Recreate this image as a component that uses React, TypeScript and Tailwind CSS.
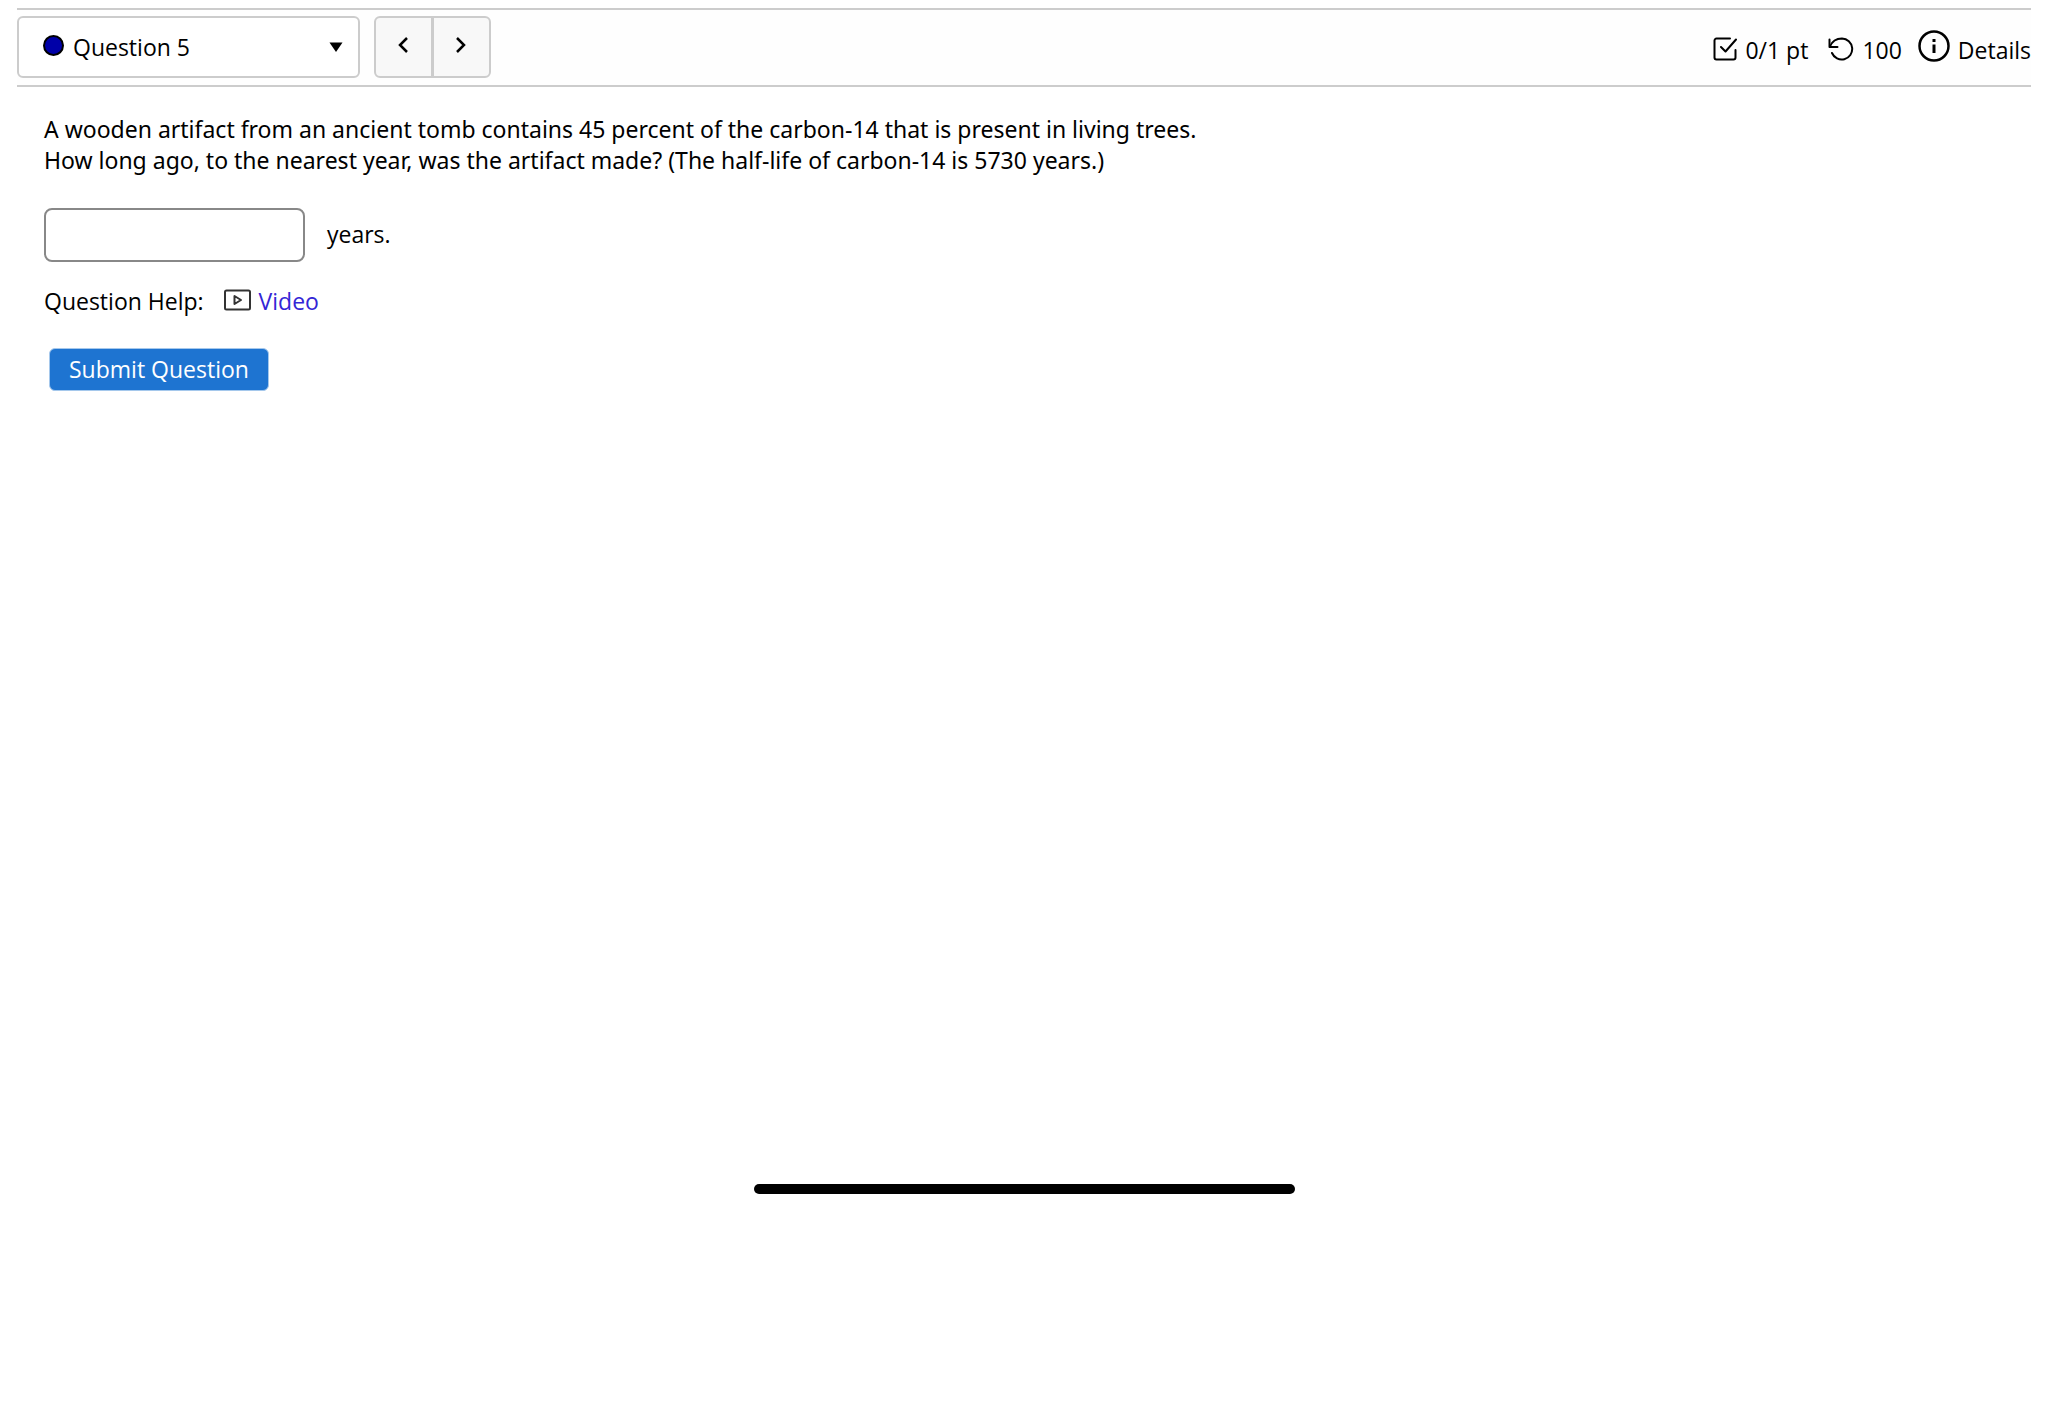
const questions = ["Question 5"];

function CheckIcon() {
  return (
    <svg className="h-6 w-6" viewBox="0 0 24 24" fill="none" stroke="currentColor" strokeWidth="2" strokeLinecap="round" strokeLinejoin="round">
      <path d="M17 1.5H3.5a2 2 0 0 0-2 2v17a2 2 0 0 0 2 2h17a2 2 0 0 0 2-2V13" />
      <path d="M8 10l4.500 4.500L23 2.500" />
    </svg>
  );
}

function RetryIcon() {
  return (
    <svg className="h-6 w-[26px]" viewBox="0 0 26 24" fill="none" stroke="currentColor" strokeWidth="2" strokeLinecap="round" strokeLinejoin="round">
      <path d="M1.500 2.500v7.500h8" />
      <path d="M2 9.500C4 4.500 8.500 1.500 14 1.500a10.500 10.500 0 1 1-10 14.500" />
    </svg>
  );
}

function InfoIcon() {
  return (
    <svg className="mb-0.5 h-8 w-8" viewBox="0 0 32 32" fill="none" stroke="currentColor">
      <circle cx="16" cy="16" r="14.500" strokeWidth="2.500" />
      <path d="M16 14.500v8.500" strokeWidth="3" />
      <path d="M16 9v3" strokeWidth="3" />
    </svg>
  );
}

function VideoIcon() {
  return (
    <svg className="mb-1 h-[22px] w-[27px] text-[#333]" viewBox="0 0 27 22" fill="none" stroke="currentColor" strokeWidth="2" strokeLinejoin="round">
      <rect x="1" y="1.500" width="25" height="19" rx="1.500" />
      <path d="M10.500 7v8l6.500-4z" />
    </svg>
  );
}

function Header() {
  return (
    <header className="flex items-center justify-between border-y-2 border-[#ccc] bg-[#fefefe] pb-[7px] pt-1.5">
      <div className="flex gap-3.5">
        <div className="relative">
          <select
            aria-label="Question"
            className="h-[62px] w-[343px] appearance-none rounded-md border-2 border-[#ccc] bg-white pl-[54px] pr-10"
          >
            {questions.map((q) => (
              <option key={q}>{q}</option>
            ))}
          </select>
          <span className="pointer-events-none absolute left-[26px] top-[19px] h-[21px] w-[21px] rounded-full border-2 border-black bg-[#0000a8]" />
          <svg className="pointer-events-none absolute right-[17px] top-[26px] h-[10px] w-[14px]" viewBox="0 0 14 10">
            <path d="M.5.500h13L7 10z" />
          </svg>
        </div>
        <div className="flex">
          <button aria-label="Previous question" className="flex h-[62px] w-[59px] items-center justify-center rounded-l-md border-2 border-[#ccc] bg-[#f8f8f8] pb-1 pr-0.5">
            <svg className="h-4 w-[10px]" viewBox="0 0 10 16" fill="none" stroke="black" strokeWidth="2.500">
              <path d="M9 1L2 8l7 7" />
            </svg>
          </button>
          <button aria-label="Next question" className="flex h-[62px] w-[58px] items-center justify-center rounded-r-md border-2 border-l border-[#ccc] bg-[#f8f8f8] pb-1 pr-0.5">
            <svg className="h-4 w-[10px]" viewBox="0 0 10 16" fill="none" stroke="black" strokeWidth="2.500">
              <path d="M1 1l7 7-7 7" />
            </svg>
          </button>
        </div>
      </div>
      <div className="flex items-center">
        <span className="mt-1">
          <CheckIcon />
        </span>
        <span className="ml-2 mt-1.5">0/1 pt</span>
        <span className="ml-5 mt-1">
          <RetryIcon />
        </span>
        <span className="ml-2 mt-1.5">100</span>
        <button className="ml-4 flex items-center gap-2">
          <InfoIcon />
          <span className="mt-1.5">Details</span>
        </button>
      </div>
    </header>
  );
}

export default function App() {
  return (
    <div className="px-[17px] pt-2 font-['Open_Sans',sans-serif] text-[23px] leading-[31px] text-black">
      <Header />
      <main className="px-[27px] pt-[27px]">
        <p className="font-['Noto_Sans',sans-serif]">
          A wooden artifact from an ancient tomb contains 45 percent of the carbon-14 that is present in living trees.
          <br />
          How long ago, to the nearest year, was the artifact made? (The half-life of carbon-14 is 5730 years.)
        </p>
        <label className="mt-8 flex items-center gap-[22px]">
          <input type="text" className="h-[54px] w-[261px] rounded-lg border-2 border-[#888] bg-white px-3" />
          <span className="pb-0.5">years.</span>
        </label>
        <div className="mt-6 flex items-center">
          <span>Question Help:</span>
          <a href="#video" className="ml-5 flex items-center gap-2 text-[#3325d6]">
            <VideoIcon />
            Video
          </a>
        </div>
        <button className="ml-[5px] mt-[31px] h-[43px] rounded-md border border-[#a5c8ec] bg-[#1e74d1] px-[19px] text-white">
          Submit Question
        </button>
      </main>
      <div className="mx-auto mt-[793px] h-[10px] w-[541px] rounded-full bg-black" />
    </div>
  );
}
